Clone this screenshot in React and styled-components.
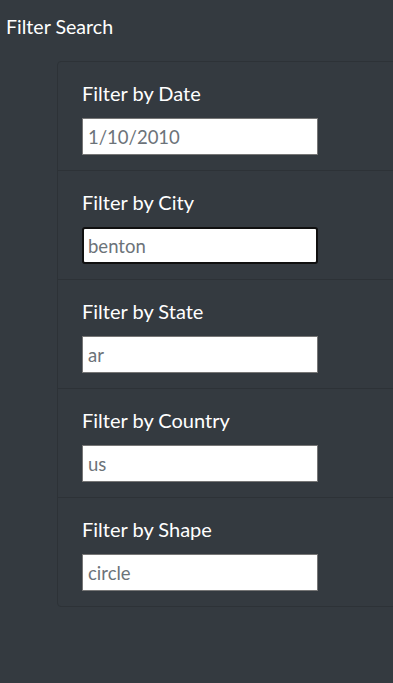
import React from "react";
import styled, { createGlobalStyle } from "styled-components";

const Global = createGlobalStyle`
  html, body { margin: 0; padding: 0; background: #343a40; overflow: hidden; }
  body { font-family: "Lato", "Noto Sans", sans-serif; color: #fff; }
  * { box-sizing: border-box; }
`;

const Page = styled.div`
  min-height: 683px;
  background: #343a40;
  display: flex;
  flex-direction: column;
`;

const Title = styled.h1`
  margin: 0;
  padding: 13px 6px 0;
  height: 61px;
  font-size: 19.6px;
  font-weight: 400;
  line-height: 27px;
  color: #fff;
`;

const Body = styled.div`
  display: flex;
  padding-left: 57px;
  width: 100%;
  overflow: hidden;
`;

const Card = styled.ul`
  list-style: none;
  margin: 0;
  padding: 0;
  width: 400px;
  flex-shrink: 0;
  border: 1px solid #2d3237;
  border-radius: 4px;
  background: #343a40;
`;

const Item = styled.li`
  padding: 16px 24px 15px;
  border-top: ${(p) => (p.$first ? "none" : "1px solid #2d3237")};
  display: flex;
  flex-direction: column;
  align-items: flex-start;
`;

const Label = styled.label`
  font-size: 20px;
  line-height: 30px;
  margin-bottom: 10px;
  color: #fff;
`;

const Input = styled.input`
  width: 236px;
  height: 37px;
  margin: 0;
  padding: 0 5px;
  font-family: "Lato", "Noto Sans", sans-serif;
  font-size: 18.5px;
  color: #6c7379;
  background: #fff;
  border: 1px solid #767676;
  border-radius: 0;
  outline: none;
  ${(p) =>
    p.$focused &&
    `
    border: 2px solid #101010;
    border-radius: 3px;
    box-shadow: inset 0 0 0 1px #fff;
    padding: 0 4px;
  `}
`;

const filters = [
  { label: "Filter by Date", value: "1/10/2010" },
  { label: "Filter by City", value: "benton", focused: true },
  { label: "Filter by State", value: "ar" },
  { label: "Filter by Country", value: "us" },
  { label: "Filter by Shape", value: "circle" },
];

export default function App() {
  return (
    <Page>
      <Global />
      <Title>Filter Search</Title>
      <Body>
        <Card>
          {filters.map((f, i) => (
            <Item key={f.label} $first={i === 0}>
              <Label>{f.label}</Label>
              <Input defaultValue={f.value} $focused={f.focused} readOnly />
            </Item>
          ))}
        </Card>
      </Body>
    </Page>
  );
}
